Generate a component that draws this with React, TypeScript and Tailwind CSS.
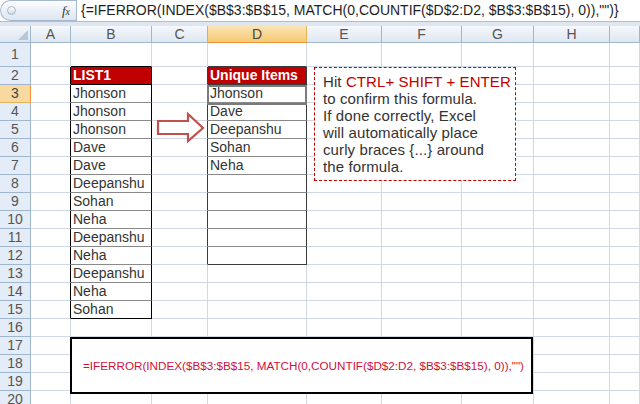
// Excel sheet: extract unique items with an array formula.
import React from 'react';

const COLS = ['A', 'B', 'C', 'D', 'E', 'F', 'G', 'H', ''];
const ROWS = Array.from({ length: 20 }, (_, i) => i + 1);

const LIST1 = ['Jhonson', 'Jhonson', 'Jhonson', 'Dave', 'Dave', 'Deepanshu', 'Sohan', 'Neha', 'Deepanshu', 'Neha', 'Deepanshu', 'Neha', 'Sohan'];
const UNIQUE = ['Jhonson', 'Dave', 'Deepanshu', 'Sohan', 'Neha'];

const FORMULA = '=IFERROR(INDEX($B$3:$B$15, MATCH(0,COUNTIF($D$2:D2, $B$3:$B$15), 0)),"")';

function cellValue(col: string, row: number): string {
  if (col === 'B' && row >= 3 && row <= 15) return LIST1[row - 3];
  if (col === 'D' && row >= 3 && row <= 7) return UNIQUE[row - 3];
  return '';
}

function borderRight(col: string, row: number): string {
  if ((col === 'A' || col === 'B') && row >= 2 && row <= 15) return 'border-r-black';
  if ((col === 'C' || col === 'D') && row >= 2 && row <= 12) return 'border-r-[#3a3a3a]';
  return 'border-r-[#d0d7e5]';
}

function borderBottom(col: string, row: number): string {
  if (col === 'B') {
    if (row === 1 || row === 2 || row === 15) return 'border-b-black';
    if (row > 2 && row < 15) return 'border-b-[#8a8a8a]';
  }
  if (col === 'D') {
    if (row === 1 || row === 2 || row === 12) return 'border-b-[#3a3a3a]';
    if (row > 2 && row < 12) return 'border-b-[#8a8a8a]';
  }
  return 'border-b-[#d0d7e5]';
}

function Cell({ col, row }: { col: string; row: number }) {
  const isHeader = row === 2 && (col === 'B' || col === 'D');
  return (
    <div
      className={`flex items-end overflow-hidden whitespace-nowrap border-r border-b pl-[2px] text-[14px] leading-[17px] ${borderRight(col, row)} ${borderBottom(col, row)} ${
        isHeader ? 'bg-[#c00000] font-bold text-white' : 'bg-white text-[#333]'
      }`}
    >
      {isHeader ? (col === 'B' ? 'LIST1' : 'Unique Items') : cellValue(col, row)}
    </div>
  );
}

function FormulaBar() {
  return (
    <div className="flex h-[22px] border-b border-[#a9bfd6] bg-white">
      <div className="flex w-[76px] items-center rounded-l-full border border-r-0 border-[#a6b9d1] bg-gradient-to-b from-[#fbfcfe] to-[#dde6f1] pl-[6px]">
        <div className="h-[9px] w-[9px] rounded-full border border-[#aab7c8] bg-gradient-to-b from-white to-[#cfd8e4]" />
        <span className="ml-auto mr-[6px] font-['Liberation_Serif',serif] text-[13px] italic text-[#333]">
          f<span className="text-[10px]">x</span>
        </span>
      </div>
      <div className="flex flex-1 items-center border-l border-[#a6b9d1] pl-[4px] text-[14px] text-[#1e1e1e]">
        {'{' + FORMULA + '}'}
      </div>
    </div>
  );
}

function Arrow() {
  return (
    <svg className="absolute left-[155px] top-[110px]" width="52" height="34" viewBox="0 0 52 34">
      <path
        d="M3 11 L33 11 L33 4 L48 18 L33 31 L33 24 L3 24 Z"
        fill="white"
        stroke="#c0504d"
        strokeWidth="2.2"
        strokeLinejoin="miter"
      />
    </svg>
  );
}

export default function App() {
  return (
    <div className="relative h-[404px] w-[640px] overflow-hidden bg-white font-['Liberation_Sans',Arial,sans-serif]">
      <FormulaBar />
      <div className="h-[4px] bg-[#dfe6ef]" />

      <div className="grid grid-cols-[31px_40px_81px_56px_99px_75px_80px_72px_76px_1fr] grid-rows-[17px_24px_repeat(20,18px)]">
        {/* corner */}
        <div className="relative border-r border-b border-[#9eb6ce] bg-gradient-to-b from-[#f4f7fb] to-[#dce5f0]">
          <div className="absolute bottom-[2px] right-[2px] h-0 w-0 border-b-[10px] border-l-[10px] border-b-[#b7c6d8] border-l-transparent" />
        </div>
        {COLS.map((c) => (
          <div
            key={c || 'I'}
            className={`flex items-center justify-center border-r border-b text-[14px] ${
              c === 'D'
                ? 'border-r-[#e3b35e] border-b-[#f29536] bg-gradient-to-b from-[#fae4b4] to-[#f6c970] text-[#444]'
                : 'border-[#9eb6ce] bg-gradient-to-b from-[#f5f8fc] to-[#dfe7f1] text-[#555]'
            }`}
          >
            {c}
          </div>
        ))}

        {ROWS.map((r) => (
          <React.Fragment key={r}>
            <div
              className={`flex items-center justify-center border-r border-b text-[14px] ${
                r === 3
                  ? 'border-r-[#f29536] border-b-[#e3b35e] bg-[#f9d99f] text-[#444]'
                  : 'border-[#9eb6ce] bg-[#e4ecf7] text-[#555]'
              }`}
            >
              {r}
            </div>
            {COLS.map((c) => (
              <Cell key={c || 'I'} col={c} row={r} />
            ))}
          </React.Fragment>
        ))}
      </div>

      {/* active cell D3 */}
      <div className="absolute left-[207px] top-[85px] h-[20px] w-[100px] border-2 border-[#7b7b7b]" />

      <Arrow />

      {/* note text box */}
      <div className="absolute left-[314px] top-[67px] h-[114px] w-[202px] whitespace-nowrap border border-dashed border-[#c00000] bg-white px-[8px] pt-[5px] text-[15px] leading-[17px] tracking-[0.1px] text-[#333]">
        <div>
          Hit <span className="text-[#c00000]">CTRL+ SHIFT + ENTER</span>
        </div>
        <div>to confirm this formula.</div>
        <div>If done correctly, Excel</div>
        <div>will automatically place</div>
        <div>curly braces {'{...}'} around</div>
        <div>the formula.</div>
      </div>

      {/* formula box */}
      <div className="absolute left-[70px] top-[337px] flex h-[57px] w-[463px] items-center border-2 border-black bg-white pl-[11px] text-[11.7px] text-[#d0103a]">
        {FORMULA}
      </div>
    </div>
  );
}
